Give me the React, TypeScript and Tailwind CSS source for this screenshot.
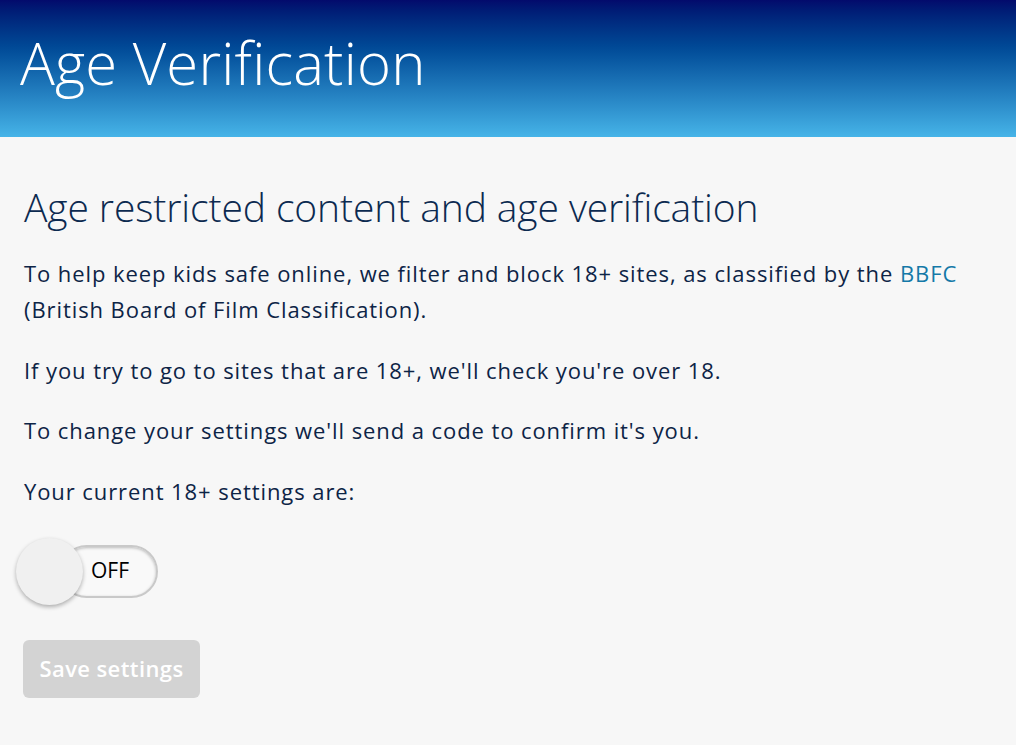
export default function App() {
  const font = { fontFamily: '"Open Sans", "Noto Sans", sans-serif' };
  return (
    <div className="min-h-[745px] bg-[#f7f7f7]" style={font}>
      <header className="h-[137px] bg-gradient-to-b from-[#030a6c] to-[#46b4e8] flex items-center pl-[20px]">
        <h1 className="text-[58px] font-light text-white leading-none tracking-[0.2px] -mt-[12px]">Age Verification</h1>
      </header>
      <main className="px-6 pt-[46px] text-[#0d2446]">
        <h2 className="text-[39px] font-light leading-[48px] tracking-[-0.1px] text-[#0c2a50]">Age restricted content and age verification</h2>
        <div className="mt-[24px] text-[22px] leading-[36px] tracking-[0.92px] flex flex-col gap-[24.5px]">
          <p>
            To help keep kids safe online, we filter and block 18+ sites, as classified by the{" "}
            <a className="text-[#1479a8]">BBFC</a>
            <br />
            (British Board of Film Classification).
          </p>
          <p>If you try to go to sites that are 18+, we'll check you're over 18.</p>
          <p>To change your settings we'll send a code to confirm it's you.</p>
          <p>Your current 18+ settings are:</p>
        </div>
        <div className="mt-[29px] -ml-[8px] relative w-[142px] h-[67px] flex items-center">
          <div className="ml-[44px] w-[98px] h-[53px] rounded-full border-2 border-[#c9c9c9] bg-[#f9f9f9] shadow-[inset_0_1px_3px_rgba(0,0,0,0.25)] flex items-center pl-[29px]">
            <span className="text-[21px] text-black">OFF</span>
          </div>
          <div className="absolute left-0 top-0 w-[67px] h-[67px] rounded-full bg-[#f0f0f0] shadow-[0_2px_4px_rgba(0,0,0,0.3)]" />
        </div>
        <button className="mt-[35px] -ml-[1px] w-[177px] h-[58px] rounded-[6px] bg-[#d3d3d3] text-white text-[22px] font-semibold tracking-[0.4px]">
          Save settings
        </button>
      </main>
    </div>
  );
}
